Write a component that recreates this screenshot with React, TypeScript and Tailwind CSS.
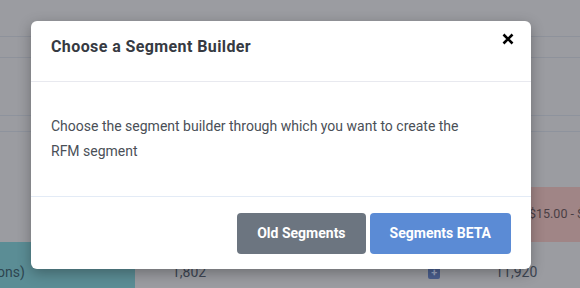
import React from "react";

export default function App() {
  const font = { fontFamily: "Roboto, 'Liberation Sans', Arial, sans-serif" };
  return (
    <div className="relative h-[288px] w-[580px] overflow-hidden bg-[#9b9ca1]" style={font}>
      {/* background page (dimmed) */}
      <div className="flex h-full flex-col">
        <div className="h-[37px] border-b border-[#8e929b]" />
        <div className="h-[21px] border-b border-[#8e929b]" />
        <div className="h-[58px] border-b border-[#8e939d]" />
        <div className="h-[16px] border-b border-[#8e939d]" />
        <div className="h-[55px]" />
        <div className="flex h-[55px]">
          <div className="flex-1" />
          <div className="flex w-[140px] items-center bg-[#a08586] pl-[89px] text-[12.5px] text-[#4a3f45] whitespace-nowrap">
            $15.00 - $30.00
          </div>
        </div>
        <div className="flex flex-1 items-center text-[14px] text-[#3e4654]">
          <div className="flex h-full w-[135px] items-center bg-[#5b8d95] pt-[14px] text-[#2e4550]">
            <span className="-ml-[3px]">ons)</span>
          </div>
          <div className="w-[37px]" />
          <span className="pt-[14px]">1,802</span>
          <div className="w-[222px]" />
          <div className="mt-[14px] flex h-[13px] w-[12px] items-center justify-center rounded-[2px] bg-[#4b5f8e] text-[11px] font-bold leading-none text-[#9ba6c2]">
            +
          </div>
          <div className="w-[55px]" />
          <span className="pt-[14px]">11,920</span>
        </div>
      </div>

      {/* modal */}
      <div className="absolute left-[31px] top-[21px] w-[500px] rounded-[6px] bg-white shadow-[0_4px_14px_rgba(0,0,0,0.3)]">
        <div className="relative h-[61px] border-b border-[#e8e9ef] px-5 pt-4">
          <h2 className="text-[16px] font-bold leading-[20px] tracking-[0.4px] text-[#363a42]">
            Choose a Segment Builder
          </h2>
          <button className="absolute right-[16px] top-[11px] flex h-[14px] w-[14px] items-center justify-center">
            <svg width="12" height="12" viewBox="0 0 12 12">
              <path d="M1.5 1.5 L10.5 10.5 M10.5 1.5 L1.5 10.5" stroke="#000" strokeWidth="2.6" strokeLinecap="butt" />
            </svg>
          </button>
        </div>
        <div className="px-5 py-8">
          <p className="w-[420px] text-[14px] leading-[25px] text-[#4a4f57]">
            Choose the segment builder through which you want to create the RFM segment
          </p>
        </div>
        <div className="flex justify-end gap-1 border-t border-[#e3ebf6] px-5 pb-[15px] pt-4">
          <button className="h-[41px] rounded-[4px] bg-[#6c7580] px-5 text-[14px] font-bold text-white">
            Old Segments
          </button>
          <button className="h-[41px] rounded-[4px] bg-[#5b8bd5] px-5 text-[14px] font-bold text-white">
            Segments BETA
          </button>
        </div>
      </div>
    </div>
  );
}
